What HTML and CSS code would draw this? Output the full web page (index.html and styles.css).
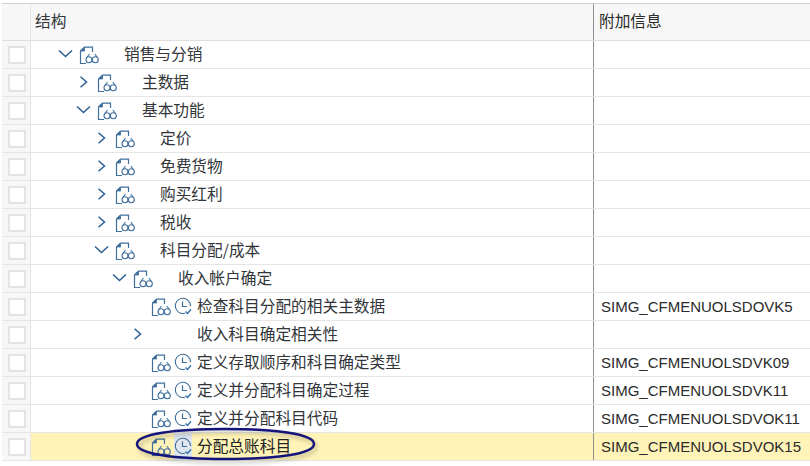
FILE: index.html
```html
<!DOCTYPE html>
<html lang="zh">
<head>
<meta charset="utf-8">
<title>结构</title>
<link rel="stylesheet" href="styles.css">
</head>
<body>
<svg class="defs" width="0" height="0">
  <symbol id="doc" viewBox="0 0 20 20">
    <path d="M5.500 3.100H13.500V8M5.500 3.100L1.500 7V19.500H7" fill="none" stroke="#3f6f9c" stroke-width="1.200"/>
    <path d="M1.500 7L5.500 3.100V7Z" fill="#3f6f9c" stroke="#3f6f9c" stroke-width="0.800"/>
    <circle cx="10" cy="15.800" r="3" fill="none" stroke="#3f6f9c" stroke-width="1.100"/>
    <circle cx="16.300" cy="15.800" r="3" fill="none" stroke="#3f6f9c" stroke-width="1.100"/>
    <path d="M13 15.500H13.300M7.800 13.500L10.500 10M18.500 13.500L15.800 10" fill="none" stroke="#3f6f9c" stroke-width="1.100"/>
  </symbol>
  <symbol id="clock" viewBox="0 0 18 18">
    <path d="M11 16.200A7.600 7.600 0 1 1 16.500 9" fill="none" stroke="#3f6f9c" stroke-width="1.100"/>
    <path d="M8.500 4.500V9.500H13" fill="none" stroke="#3f6f9c" stroke-width="1.200"/>
    <path d="M11.500 14.500L13.500 16.500L17 12.500" fill="none" stroke="#2f6fa8" stroke-width="1.400"/>
  </symbol>
  <symbol id="down" viewBox="0 0 18 18"><path d="M3 4.500L9.500 10.500L16 4.500" fill="none" stroke="#2b5f93" stroke-width="1.500"/></symbol>
  <symbol id="right" viewBox="0 0 18 18"><path d="M6.500 2.700L12.500 8L6.500 13.300" fill="none" stroke="#2b5f93" stroke-width="1.500"/></symbol>
</svg>
<main class="table">
  <div class="row head">
    <div class="sel"></div>
    <div class="main"><span class="htext">结构</span></div>
    <div class="info"><span class="hinfo">附加信息</span></div>
  </div>
  <div class="row"><div class="sel"><i class="box"></i></div><div class="main l0"><svg class="chev"><use href="#down"/></svg><svg class="doc"><use href="#doc"/></svg><span class="gap"></span><span class="txt">销售与分销</span></div><div class="info"></div></div>
  <div class="row"><div class="sel"><i class="box"></i></div><div class="main l1"><svg class="chev"><use href="#right"/></svg><svg class="doc"><use href="#doc"/></svg><span class="gap"></span><span class="txt">主数据</span></div><div class="info"></div></div>
  <div class="row"><div class="sel"><i class="box"></i></div><div class="main l1"><svg class="chev"><use href="#down"/></svg><svg class="doc"><use href="#doc"/></svg><span class="gap"></span><span class="txt">基本功能</span></div><div class="info"></div></div>
  <div class="row"><div class="sel"><i class="box"></i></div><div class="main l2"><svg class="chev"><use href="#right"/></svg><svg class="doc"><use href="#doc"/></svg><span class="gap"></span><span class="txt">定价</span></div><div class="info"></div></div>
  <div class="row"><div class="sel"><i class="box"></i></div><div class="main l2"><svg class="chev"><use href="#right"/></svg><svg class="doc"><use href="#doc"/></svg><span class="gap"></span><span class="txt">免费货物</span></div><div class="info"></div></div>
  <div class="row"><div class="sel"><i class="box"></i></div><div class="main l2"><svg class="chev"><use href="#right"/></svg><svg class="doc"><use href="#doc"/></svg><span class="gap"></span><span class="txt">购买红利</span></div><div class="info"></div></div>
  <div class="row"><div class="sel"><i class="box"></i></div><div class="main l2"><svg class="chev"><use href="#right"/></svg><svg class="doc"><use href="#doc"/></svg><span class="gap"></span><span class="txt">税收</span></div><div class="info"></div></div>
  <div class="row"><div class="sel"><i class="box"></i></div><div class="main l2"><svg class="chev"><use href="#down"/></svg><svg class="doc"><use href="#doc"/></svg><span class="gap"></span><span class="txt">科目分配/成本</span></div><div class="info"></div></div>
  <div class="row"><div class="sel"><i class="box"></i></div><div class="main l3"><svg class="chev"><use href="#down"/></svg><svg class="doc"><use href="#doc"/></svg><span class="gap"></span><span class="txt">收入帐户确定</span></div><div class="info"></div></div>
  <div class="row"><div class="sel"><i class="box"></i></div><div class="main l4"><span class="chev"></span><svg class="doc"><use href="#doc"/></svg><svg class="clock"><use href="#clock"/></svg><span class="txt">检查科目分配的相关主数据</span></div><div class="info">SIMG_CFMENUOLSDOVK5</div></div>
  <div class="row"><div class="sel"><i class="box"></i></div><div class="main l4"><svg class="chev"><use href="#right"/></svg><span class="doc"></span><span class="clock"></span><span class="txt">收入科目确定相关性</span></div><div class="info"></div></div>
  <div class="row"><div class="sel"><i class="box"></i></div><div class="main l4"><span class="chev"></span><svg class="doc"><use href="#doc"/></svg><svg class="clock"><use href="#clock"/></svg><span class="txt">定义存取顺序和科目确定类型</span></div><div class="info">SIMG_CFMENUOLSDVK09</div></div>
  <div class="row"><div class="sel"><i class="box"></i></div><div class="main l4"><span class="chev"></span><svg class="doc"><use href="#doc"/></svg><svg class="clock"><use href="#clock"/></svg><span class="txt">定义并分配科目确定过程</span></div><div class="info">SIMG_CFMENUOLSDVK11</div></div>
  <div class="row"><div class="sel"><i class="box"></i></div><div class="main l4"><span class="chev"></span><svg class="doc"><use href="#doc"/></svg><svg class="clock"><use href="#clock"/></svg><span class="txt">定义并分配科目代码</span></div><div class="info">SIMG_CFMENUOLSDVOK11</div></div>
  <div class="row hot"><div class="sel"><i class="box"></i></div><div class="main l4"><span class="chev"></span><svg class="doc"><use href="#doc"/></svg><span class="focus"><svg class="clock"><use href="#clock"/></svg></span><span class="txt">分配总账科目</span></div><div class="info">SIMG_CFMENUOLSDVOK15</div></div>
</main>
<svg class="ring" width="190" height="44" viewBox="0 0 190 44">
  <path d="M4 19C4 9 42 4 92.500 4C143 4 181 9 181 19C181 29 143 34 92.500 34C42 34 4 29 4 19Z" fill="none" stroke="#14147a" stroke-width="2.500"/>
</svg>
</body>
</html>
```
FILE: styles.css
```css
html, body {
  margin: 0;
  padding: 0;
  width: 810px;
  height: 466px;
  overflow: hidden;
  background: #fff;
}
body {
  position: relative;
  font-family: "Noto Sans CJK SC", "Liberation Sans", sans-serif;
  color: #32363a;
}
.defs {
  position: absolute;
}
.table {
  margin: 3px 0 0 2px;
  border-top: 1px solid #ccd4dc;
}
.row {
  display: flex;
  height: 28px;
  box-sizing: border-box;
  border-bottom: 1px solid #e5e5e5;
}
.head {
  height: 37px;
  background: #f7f7f7;
  border-bottom: 1px solid #dedede;
}
.sel {
  width: 28px;
  flex: none;
  display: flex;
  align-items: center;
  justify-content: center;
  background: #f7f7f7;
  border-right: 1px solid #e5e5e5;
}
.box {
  display: block;
  width: 14px;
  height: 14px;
  margin: 1px 0 0 2px;
  background: #fff;
  border: 2px solid #e3e3e3;
}
.main {
  width: 562px;
  box-sizing: border-box;
  flex: none;
  display: flex;
  align-items: center;
  font-size: 15.7px;
  white-space: nowrap;
}
.l0 { padding-left: 25px; }
.l1 { padding-left: 43px; }
.l2 { padding-left: 61px; }
.l3 { padding-left: 79px; }
.l4 { padding-left: 97px; }
.chev {
  width: 18px;
  height: 18px;
  flex: none;
  align-self: flex-start;
  margin-top: 5px;
}
.doc {
  width: 20px;
  height: 20px;
  flex: none;
  align-self: flex-start;
  margin: 3px 0 0 5px;
}
.gap {
  width: 25px;
  flex: none;
}
.clock {
  display: block;
  width: 18px;
  height: 18px;
  flex: none;
  align-self: flex-start;
  margin: 4px 5px 0 3px;
}
.txt {
  line-height: 24px;
  position: relative;
  top: -1px;
}
.htext {
  padding-left: 4px;
  font-size: 15.7px;
  position: relative;
  top: -1px;
  line-height: 36px;
}
.info {
  flex: 1;
  border-left: 1px solid #8f8f8f;
  padding-left: 7px;
  font-family: "Liberation Sans", sans-serif;
  font-size: 15px;
  line-height: 27px;
  color: #2b2b2b;
}
.hinfo {
  font-family: "Noto Sans CJK SC", sans-serif;
  font-size: 15.700px;
  margin-left: -2px;
  position: relative;
  top: 3px;
}
.hot .main, .hot .info {
  background: #fff3b8;
}
.hot .txt {
  color: #222;
}
.focus {
  display: block;
  align-self: stretch;
  flex: none;
  width: 18px;
  margin: 0 5px 0 3px;
  background: #dfe6ee;
}
.focus .clock {
  margin: 4px 0 0;
}
.ring {
  position: absolute;
  left: 133px;
  top: 425px;
  filter: drop-shadow(2px 3px 2px rgba(60, 60, 40, 0.35));
}
```
